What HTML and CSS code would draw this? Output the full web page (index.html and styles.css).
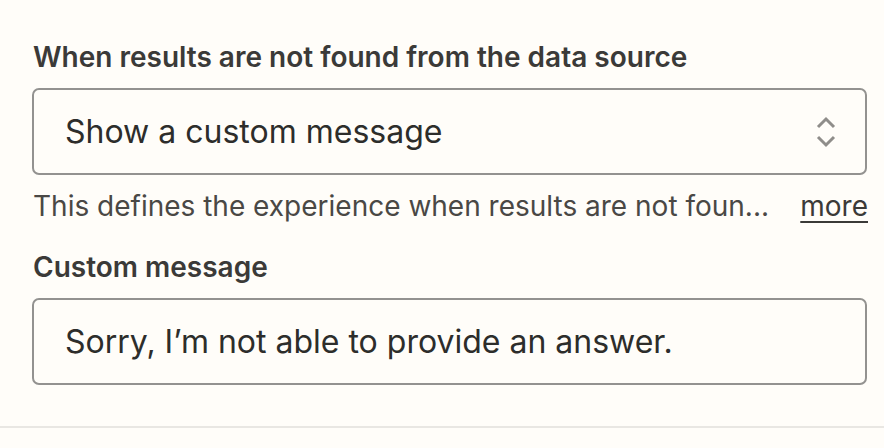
FILE: index.html
```html
<!DOCTYPE html>
<html lang="en">
<head>
    <meta charset="UTF-8">
    <title>Not found settings</title>
    <link rel="stylesheet" href="styles.css">
</head>
<body>
    <div class="panel">
        <div class="field">
            <label class="field-label">When results are not found from the data source</label>
            <div class="select-box">
                <span class="select-value">Show a custom message</span>
                <svg class="chevrons" width="22" height="36" viewBox="0 0 22 36">
                    <path d="M3 13 L11 5 L19 13" fill="none" stroke="#8f8d8a" stroke-width="3"/>
                    <path d="M3 23 L11 31 L19 23" fill="none" stroke="#8f8d8a" stroke-width="3"/>
                </svg>
            </div>
            <div class="help-row">
                <span class="help-text">This defines the experience when results are not foun...</span>
                <a class="more" href="#">more</a>
            </div>
        </div>
        <div class="field">
            <label class="field-label">Custom message</label>
            <div class="text-box">Sorry, I’m not able to provide an answer.</div>
        </div>
    </div>
    <div class="divider"></div>
</body>
</html>
```

FILE: styles.css
```css
body {
    margin: 0;
    background-color: #fffdf9;
    font-family: Inter, "Noto Sans", sans-serif;
    color: #2d2e2e;
}
.panel {
    padding: 37px 17px 0 32px;
}
.field {
    margin-bottom: 21px;
}
.field-label {
    display: block;
    font-size: 28px;
    font-weight: 600;
    line-height: 40px;
    color: #3b3a38;
    margin-bottom: 11px;
    padding-left: 1px;
}
.select-box,
.text-box {
    box-sizing: border-box;
    height: 87px;
    border: 2px solid #939290;
    border-radius: 7px;
    display: flex;
    align-items: center;
    padding: 0 30px 0 31px;
    font-size: 32px;
    color: #2d2d2b;
}
.select-box {
    justify-content: space-between;
}
.chevrons {
    margin-right: -2px;
}
.help-row {
    display: flex;
    justify-content: space-between;
    align-items: center;
    margin-top: 11px;
    padding-left: 1px;
    font-size: 28px;
    line-height: 40px;
    color: #4a4845;
}
.more {
    color: #3b3a38;
    text-decoration: underline;
    text-underline-offset: 5px;
    margin-right: -1px;
}
.divider {
    margin-top: 41px;
    border-top: 2px solid #e9e7e3;
}
```
